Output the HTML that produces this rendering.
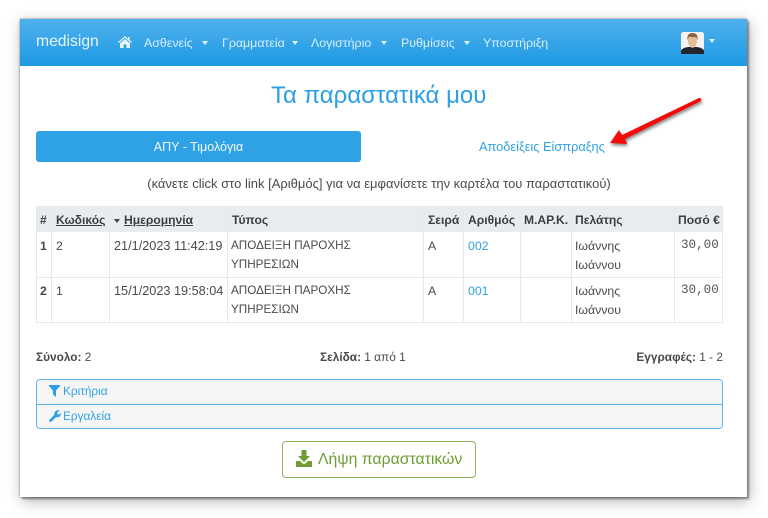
<!DOCTYPE html>
<html lang="el"><head><meta charset="utf-8"><title>Τα παραστατικά μου</title>
<style>
*{box-sizing:border-box}
html,body{margin:0;padding:0;width:768px;height:518px;overflow:hidden;background:#fff;font-family:"Liberation Sans",sans-serif;color:#444}
#wrap{position:absolute;left:0;top:0;width:768px;height:518px;background:#fff;overflow:hidden;filter:blur(.3px)}
#card{position:absolute;left:20px;top:19px;width:727px;height:478px;background:#fff;box-shadow:0 0 2px #777,2px 2px 2px rgba(0,0,0,.4),2px 4px 14px rgba(0,0,0,.3)}
#nav{position:absolute;left:20px;top:19px;width:727px;height:47px;background:linear-gradient(#4fb0ec,#1d99e4)}
.t{position:absolute;white-space:nowrap;line-height:16px}
.n{font-size:12.4px;color:#d9eefb;top:35px}
.c{position:absolute;width:0;height:0;border-left:3.5px solid transparent;border-right:3.5px solid transparent;border-top:4px solid #e4f3fc}
.b{font-weight:bold}
.th{font-weight:bold;font-size:12.1px;color:#3a3f44;top:212px}
.td{font-size:12.3px;color:#4a4a4a}
.lnk{color:#2fa2e6}
.m{font-family:"Liberation Mono",monospace;font-size:12.6px;color:#555}
.v{position:absolute;top:206px;height:117px;width:1px;background:#e6e9ec}
.h{position:absolute;left:36px;width:687px;height:1px;background:#e6e9ec}
.up{font-size:11.7px}
.d{font-size:12.7px}
.f{font-size:11.85px}
svg{position:absolute}
</style></head><body><div id="wrap">
<div id="card"></div>
<div id="nav"></div>

<span class="t" style="left:36px;top:34px;font-size:15.7px;color:#e8f5fd">medisign</span>
<svg style="left:118px;top:36px" width="14" height="12" viewBox="0 0 14 12"><path fill="#e4f3fc" d="M7 0 L10 2.6 V1 H11.6 V4 L14 6.1 L13.2 7 L7 1.8 L.8 7 L0 6.1 Z M7 3 L12 7.1 V12 H8.4 V8.4 H5.6 V12 H2 V7.1 Z"/></svg>
<span class="t n" style="left:144px">Ασθενείς</span><i class="c" style="left:202px;top:41px"></i>
<span class="t n" style="left:222px">Γραμματεία</span><i class="c" style="left:292px;top:41px"></i>
<span class="t n" style="left:311px">Λογιστήριο</span><i class="c" style="left:381px;top:41px"></i>
<span class="t n" style="left:401px">Ρυθμίσεις</span><i class="c" style="left:464px;top:41px"></i>
<span class="t n" style="left:483px">Υποστήριξη</span>

<svg style="left:681px;top:32px" width="23" height="22" viewBox="0 0 23 22">
<rect width="23" height="22" rx="2.5" fill="#f4f3ef"/>
<path fill="#23262c" d="M0 22 V18.5 Q1 16 7 15 L16 15 Q22 16 23 18.5 V22 Z"/>
<path fill="#e3bd98" d="M7 6 Q7 2 11.5 2 Q16 2 16 6 V10 Q15 15 11.5 16 Q8 15 7 10 Z"/>
<path fill="#8b6344" d="M6.5 8 Q5.5 1 11.5 1 Q17.5 1 16.5 8 L15.5 5 Q11 5.5 8 4.5 Z"/>
</svg>
<i class="c" style="left:709px;top:39px"></i>

<span class="t" style="left:271px;top:82px;font-size:24px;line-height:28px;color:#2b9fe5">Τα παραστατικά μου</span>

<div style="position:absolute;left:36px;top:131px;width:325px;height:31px;background:#2fa2e6;border-radius:3px"></div>
<span class="t" style="left:36px;width:325px;text-align:center;top:139px;font-size:12.5px;color:#f0f8fd">ΑΠΥ - Τιμολόγια</span>
<span class="t lnk" style="left:479px;top:139px;font-size:12.8px">Αποδείξεις Είσπραξης</span>

<svg style="left:600px;top:90px;filter:drop-shadow(1px 2px 1.5px rgba(0,0,0,.5))" width="110" height="62" viewBox="600 90 110 62">
<path fill="#f50a0a" d="M610 143 L619 130 L622 135 L699 98 Q702 98 701 101 L625 139 L627 144 Z"/>
</svg>

<span class="t" style="left:20px;width:718px;text-align:center;top:176px;font-size:13px;color:#4a4a4a">(κάνετε click στο link [Αριθμός] για να εμφανίσετε την καρτέλα του παραστατικού)</span>

<div style="position:absolute;left:36px;top:206px;width:687px;height:26px;background:#e9ecef"></div>
<div class="h" style="top:277px"></div><div class="h" style="top:322px"></div>
<div class="v" style="left:36px"></div><div class="v" style="left:51px"></div><div class="v" style="left:109px"></div><div class="v" style="left:227px"></div><div class="v" style="left:423px"></div><div class="v" style="left:463px"></div><div class="v" style="left:520px"></div><div class="v" style="left:571px"></div><div class="v" style="left:674px"></div><div class="v" style="left:722px"></div>

<span class="t th" style="left:40px">#</span>
<span class="t th" style="left:56px;text-decoration:underline">Κωδικός</span>
<i class="c" style="left:114px;top:219px;border-top-color:#444"></i>
<span class="t th" style="left:124px;text-decoration:underline">Ημερομηνία</span>
<span class="t th" style="left:232px">Τύπος</span>
<span class="t th" style="left:428px">Σειρά</span>
<span class="t th" style="left:468px">Αριθμός</span>
<span class="t th" style="left:524px">Μ.ΑΡ.Κ.</span>
<span class="t th" style="left:575px">Πελάτης</span>
<span class="t th" style="left:678px">Ποσό €</span>

<span class="t td b" style="left:40px;top:238px">1</span>
<span class="t td" style="left:56px;top:238px">2</span>
<span class="t td d" style="left:114px;top:238px">21/1/2023 11:42:19</span>
<span class="t td up" style="left:231px;top:238px">ΑΠΟΔΕΙΞΗ ΠΑΡΟΧΗΣ</span>
<span class="t td up" style="left:231px;top:257px">ΥΠΗΡΕΣΙΩΝ</span>
<span class="t td" style="left:428px;top:238px">Α</span>
<span class="t td lnk" style="left:468px;top:238px">002</span>
<span class="t td" style="left:575px;top:238px">Ιωάννης</span>
<span class="t td" style="left:575px;top:257px">Ιωάννου</span>
<span class="t m" style="left:681px;top:237px">30,00</span>

<span class="t td b" style="left:40px;top:283px">2</span>
<span class="t td" style="left:56px;top:283px">1</span>
<span class="t td d" style="left:114px;top:283px">15/1/2023 19:58:04</span>
<span class="t td up" style="left:231px;top:283px">ΑΠΟΔΕΙΞΗ ΠΑΡΟΧΗΣ</span>
<span class="t td up" style="left:231px;top:302px">ΥΠΗΡΕΣΙΩΝ</span>
<span class="t td" style="left:428px;top:283px">Α</span>
<span class="t td lnk" style="left:468px;top:283px">001</span>
<span class="t td" style="left:575px;top:283px">Ιωάννης</span>
<span class="t td" style="left:575px;top:302px">Ιωάννου</span>
<span class="t m" style="left:681px;top:282px">30,00</span>

<span class="t td f" style="left:36px;top:349px"><b>Σύνολο:</b> 2</span>
<span class="t td f" style="left:320px;top:349px"><b>Σελίδα:</b> 1 από 1</span>
<span class="t td f" style="right:45px;top:349px"><b>Εγγραφές:</b> 1 - 2</span>

<div style="position:absolute;left:36px;top:379px;width:687px;height:50px;background:#f5f5f5;border:1px solid #66b6ea;border-radius:4px"></div>
<div style="position:absolute;left:37px;top:404px;width:685px;height:1px;background:#66b6ea"></div>
<svg style="left:49px;top:385px" width="11" height="12" viewBox="0 0 11 12"><path fill="#2b9fe5" d="M0 0 H11 V1 L7 5.5 V12 L4 9.5 V5.5 L0 1 Z"/></svg>
<span class="t lnk" style="left:63px;top:383px;font-size:11.8px">Κριτήρια</span>
<svg style="left:49px;top:410px" width="12" height="12" viewBox="0 0 12 12"><path fill="#2b9fe5" d="M0 10.2 L5.4 4.8 Q5 1.5 8 .4 Q9.6 0 10.8 .4 L8.2 2.6 L8.6 4.4 L10.2 4.8 L12 2.8 Q12.4 5.6 10 7 Q8.6 7.6 7.2 7 L2 12 H1 Z"/></svg>
<span class="t lnk" style="left:63px;top:408px;font-size:11.8px">Εργαλεία</span>

<div style="position:absolute;left:282px;top:441px;width:194px;height:37px;background:#fff;border:1px solid #8fb55a;border-radius:4px"></div>
<svg style="left:296px;top:450px" width="16" height="17" viewBox="0 0 16 17"><path fill="#6d9e33" d="M5.5 0 H10.5 V6 H14 L8 12 L2 6 H5.5 Z M0 11 H4 L8 14.5 L12 11 H16 V17 H0 Z"/></svg>
<span class="t" style="left:318px;top:451px;font-size:15.8px;line-height:18px;color:#6d9e33">Λήψη παραστατικών</span>
</div></body></html>
